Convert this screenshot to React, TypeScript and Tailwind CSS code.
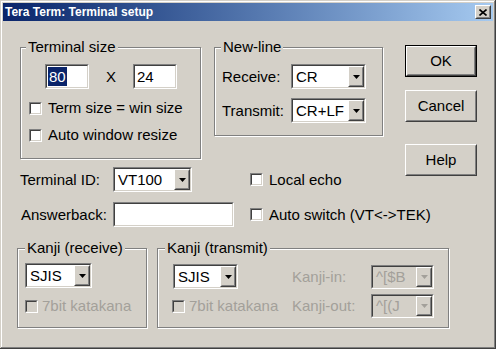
import type { ReactNode } from 'react';

const FONT = "font-['Liberation_Sans',sans-serif]";

function Sunken({ className = '', inner = 'bg-white', children }: { className?: string; inner?: string; children?: ReactNode }) {
  return (
    <div className={`shrink-0 border border-t-[#808080] border-l-[#808080] border-b-white border-r-white ${className}`}>
      <div className={`h-full w-full border border-t-[#404040] border-l-[#404040] border-b-[#d4d0c8] border-r-[#d4d0c8] ${inner}`}>
        {children}
      </div>
    </div>
  );
}

function Raised({ className = '', children }: { className?: string; children?: ReactNode }) {
  return (
    <div className={`shrink-0 border border-t-white border-l-white border-b-[#404040] border-r-[#404040] bg-[#d4d0c8] ${className}`}>
      <div className="h-full w-full border border-t-[#d4d0c8] border-l-[#d4d0c8] border-b-[#808080] border-r-[#808080] flex items-center justify-center">
        {children}
      </div>
    </div>
  );
}

function Arrow({ disabled = false }: { disabled?: boolean }) {
  return (
    <svg width="7" height="4" viewBox="0 0 7 4">
      <polygon points="0,0 7,0 3.5,4" fill={disabled ? '#a3a09a' : '#000'} />
    </svg>
  );
}

function Select({ value, className = '', disabled = false }: { value: string; className?: string; disabled?: boolean }) {
  return (
    <Sunken className={className} inner={disabled ? 'bg-[#d4d0c8]' : 'bg-white'}>
      <div className="flex h-full">
        <div className={`flex-1 flex items-center pl-[3px] text-[15px] leading-[18px] whitespace-nowrap ${disabled ? 'text-[#a3a09a]' : 'text-black'}`}>
          {value}
        </div>
        <Raised className="w-[16px] h-full">
          <Arrow disabled={disabled} />
        </Raised>
      </div>
    </Sunken>
  );
}

function Check({ label, disabled = false, gap = 'ml-[6px]' }: { label: string; disabled?: boolean; gap?: string }) {
  return (
    <div className="flex items-center h-[18px]">
      <Sunken className="w-[13px] h-[13px]" inner={disabled ? 'bg-[#d4d0c8]' : 'bg-white'} />
      <span className={`${gap} text-[15px] leading-[18px] whitespace-nowrap ${disabled ? 'text-[#a3a09a]' : 'text-black'}`}>
        {label}
      </span>
    </div>
  );
}

function Group({ label, legendLeft, className = '', children }: { label: string; legendLeft: string; className?: string; children?: ReactNode }) {
  return (
    <div className={`relative shrink-0 border border-[#808080] shadow-[1px_1px_0_#fff,inset_1px_1px_0_#fff] ${className}`}>
      <span className={`absolute -top-[10px] ${legendLeft} bg-[#d4d0c8] px-[2px] text-[15px] leading-[18px] whitespace-nowrap`}>
        {label}
      </span>
      {children}
    </div>
  );
}

function Button({ label, isDefault = false, className = '' }: { label: string; isDefault?: boolean; className?: string }) {
  const body = (
    <Raised className="w-full h-full">
      <span className="text-[15px] leading-[18px]">{label}</span>
    </Raised>
  );
  return isDefault ? (
    <div className={`border border-black ${className}`}>{body}</div>
  ) : (
    <div className={className}>{body}</div>
  );
}

export default function App() {
  return (
    <div className={`w-[496px] h-[349px] bg-[#d4d0c8] p-[3px] text-black shadow-[inset_-1px_-1px_0_#404040,inset_1px_1px_0_#d4d0c8,inset_-2px_-2px_0_#808080,inset_2px_2px_0_#fff] ${FONT}`}>
      <div className="h-[18px] flex items-center justify-between pl-[2px] pr-[2px] bg-linear-to-r from-[#0a246a] to-[#a6caf0]">
        <span className="font-bold text-[12px] leading-[14px] text-white">
          Tera Term: Terminal setup
        </span>
        <Raised className="w-[16px] h-[14px]">
          <svg width="8" height="7" viewBox="0 0 8 7">
            <path d="M0.5 0.5 L7.5 6.5 M7.5 0.5 L0.5 6.5" stroke="#000" strokeWidth="1.6" />
          </svg>
        </Raised>
      </div>

      <div className="flex mt-[24px]">
        <div className="ml-[17px] mt-[2px] w-[363px] flex flex-col">
          <div className="flex items-start">
            <Group label="Terminal size" legendLeft="left-[5px]" className="w-[181px] h-[112px]">
              <div className="flex flex-col pt-[16px] pl-[24px]">
                <div className="flex items-center">
                  <Sunken className="w-[44px] h-[25px]">
                    <div className="h-full flex items-center pl-[1px]">
                      <span className="bg-[#0a246a] text-white text-[15px] leading-[19px] px-[1px]">80</span>
                    </div>
                  </Sunken>
                  <div className="w-[44px] flex justify-center text-[15px] leading-[18px]">X</div>
                  <Sunken className="w-[44px] h-[25px]">
                    <div className="h-full flex items-center pl-[2px] text-[15px] leading-[18px]">24</div>
                  </Sunken>
                </div>
                <div className="-ml-[16px] mt-[10px] flex flex-col gap-[9px]">
                  <Check label="Term size = win size" />
                  <Check label="Auto window resize" />
                </div>
              </div>
            </Group>
            <Group label="New-line" legendLeft="left-[6px]" className="ml-[13px] w-[169px] h-[89px]">
              <div className="grid grid-cols-[69px_75px] gap-y-[9px] pt-[16px] pl-[7px] items-center text-[15px] leading-[18px]">
                <span>Receive:</span>
                <Select value="CR" className="w-[75px] h-[25px]" />
                <span>Transmit:</span>
                <Select value="CR+LF" className="w-[75px] h-[25px]" />
              </div>
            </Group>
          </div>

          <div className="grid grid-cols-[93px_137px_1fr] mt-[8px] h-[25px] items-center text-[15px] leading-[18px]">
            <span className="whitespace-nowrap">Terminal ID:</span>
            <Select value="VT100" className="w-[79px] h-[25px]" />
            <Check label="Local echo" />
          </div>
          <div className="grid grid-cols-[93px_137px_1fr] mt-[10px] h-[25px] items-center text-[15px] leading-[18px]">
            <span className="pl-[1px] whitespace-nowrap">Answerback:</span>
            <Sunken className="w-[121px] h-[25px]" />
            <Check label="Auto switch (VT<->TEK)" />
          </div>
        </div>

        <div className="ml-[22px] flex flex-col">
          <Button label="OK" isDefault className="w-[72px] h-[32px]" />
          <Button label="Cancel" className="mt-[13px] w-[72px] h-[32px]" />
          <Button label="Help" className="mt-[22px] w-[72px] h-[32px]" />
        </div>
      </div>

      <div className="flex ml-[14px] mt-[21px]">
        <Group label="Kanji (receive)" legendLeft="left-[7px]" className="w-[130px] h-[80px]">
          <div className="flex flex-col pt-[14px] pl-[7px]">
            <Select value="SJIS" className="w-[67px] h-[25px]" />
            <div className="mt-[9px]">
              <Check label="7bit katakana" disabled gap="ml-[4px]" />
            </div>
          </div>
        </Group>
        <Group label="Kanji (transmit)" legendLeft="left-[7px]" className="ml-[10px] w-[292px] h-[80px]">
          <div className="grid grid-cols-[120px_79px_63px] grid-rows-[25px_24px] gap-y-[5px] pt-[15px] pl-[14px] items-center text-[15px] leading-[18px]">
            <Select value="SJIS" className="ml-[1px] w-[65px] h-[25px]" />
            <span className="text-[#a3a09a]">Kanji-in:</span>
            <Select value="^[$B" disabled className="w-[63px] h-[24px]" />
            <Check label="7bit katakana" disabled gap="ml-[4px]" />
            <span className="text-[#a3a09a] whitespace-nowrap">Kanji-out:</span>
            <Select value="^[(J" disabled className="w-[63px] h-[24px]" />
          </div>
        </Group>
      </div>
    </div>
  );
}
